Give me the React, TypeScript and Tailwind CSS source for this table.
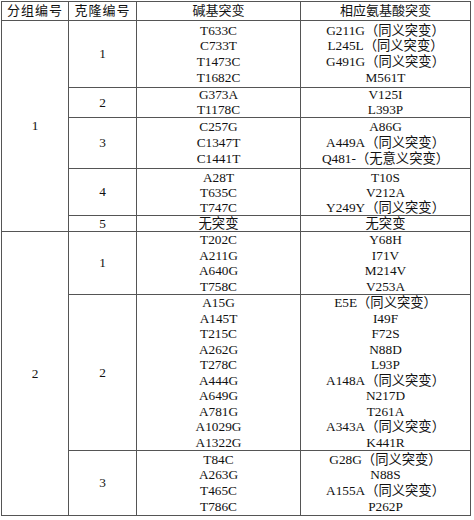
type Clone = {
  id: string;
  bases: string[];
  aminos: string[];
  height: string;
  leading: string;
};

type Group = {
  id: string;
  clones: Clone[];
};

const groups: Group[] = [
  {
    id: "1",
    clones: [
      {
        id: "1",
        bases: ["T633C", "C733T", "T1473C", "T1682C"],
        aminos: ["G211G（同义突变）", "L245L（同义突变）", "G491G（同义突变）", "M561T"],
        height: "h-[67px]",
        leading: "leading-[15.7px]",
      },
      {
        id: "2",
        bases: ["G373A", "T1178C"],
        aminos: ["V125I", "L393P"],
        height: "h-[30px]",
        leading: "leading-[14.5px]",
      },
      {
        id: "3",
        bases: ["C257G", "C1347T", "C1441T"],
        aminos: ["A86G", "A449A（同义突变）", "Q481-（无意义突变）"],
        height: "h-[51px]",
        leading: "leading-[15.7px]",
      },
      {
        id: "4",
        bases: ["A28T", "T635C", "T747C"],
        aminos: ["T10S", "V212A", "Y249Y（同义突变）"],
        height: "h-[47px]",
        leading: "leading-[15px]",
      },
      { id: "5", bases: ["无突变"], aminos: ["无突变"], height: "h-[16px]", leading: "leading-[14px]" },
    ],
  },
  {
    id: "2",
    clones: [
      {
        id: "1",
        bases: ["T202C", "A211G", "A640G", "T758C"],
        aminos: ["Y68H", "I71V", "M214V", "V253A"],
        height: "h-[63px]",
        leading: "leading-[15.5px]",
      },
      {
        id: "2",
        bases: ["A15G", "A145T", "T215C", "A262G", "T278C", "A444G", "A649G", "A781G", "A1029G", "A1322G"],
        aminos: [
          "E5E（同义突变）",
          "I49F",
          "F72S",
          "N88D",
          "L93P",
          "A148A（同义突变）",
          "N217D",
          "T261A",
          "A343A（同义突变）",
          "K441R",
        ],
        height: "h-[156px]",
        leading: "leading-[15.5px]",
      },
      {
        id: "3",
        bases: ["T84C", "A263G", "T465C", "T786C"],
        aminos: ["G28G（同义突变）", "N88S", "A155A（同义突变）", "P262P"],
        height: "h-[65px]",
        leading: "leading-[15.7px]",
      },
    ],
  },
];

const font = "font-['Liberation_Serif','Noto_Sans_CJK_SC',serif]";
const cell = `border border-[#555] p-0 text-center align-middle text-[13.3px] leading-[14px] text-[#111] ${font}`;

const Lines = ({ items, leading }: { items: string[]; leading: string }) => (
  <div className={`flex flex-col items-center ${leading}`}>
    {items.map((item) => (
      <span key={item} className="whitespace-nowrap">
        {item}
      </span>
    ))}
  </div>
);

export default function App() {
  return (
    <div className={`h-[520px] w-[474px] bg-white pl-px pt-px ${font}`}>
      <table className={`w-[469px] table-fixed border-collapse border border-[#555] ${font}`}>
        <colgroup>
          <col className="w-[67px]" />
          <col className="w-[68px]" />
          <col className="w-[164px]" />
          <col className="w-[170px]" />
        </colgroup>
        <thead>
          <tr className="h-[19px]">
            <th className={`${cell} text-[13px] font-normal tracking-[1px] text-[#3a3a3a]`}>分组编号</th>
            <th className={`${cell} text-[13px] font-normal tracking-[1px] text-[#3a3a3a]`}>克隆编号</th>
            <th className={`${cell} text-[13px] font-normal text-[#3a3a3a]`}>碱基突变</th>
            <th className={`${cell} text-[13px] font-normal text-[#3a3a3a]`}>相应氨基酸突变</th>
          </tr>
        </thead>
        <tbody>
          {groups.map((group) =>
            group.clones.map((clone, i) => (
              <tr key={`${group.id}-${clone.id}`} className={clone.height}>
                {i === 0 && (
                  <td className={cell} rowSpan={group.clones.length}>
                    {group.id}
                  </td>
                )}
                <td className={cell}>{clone.id}</td>
                <td className={cell}>
                  <Lines items={clone.bases} leading={clone.leading} />
                </td>
                <td className={cell}>
                  <Lines items={clone.aminos} leading={clone.leading} />
                </td>
              </tr>
            )),
          )}
        </tbody>
      </table>
    </div>
  );
}
